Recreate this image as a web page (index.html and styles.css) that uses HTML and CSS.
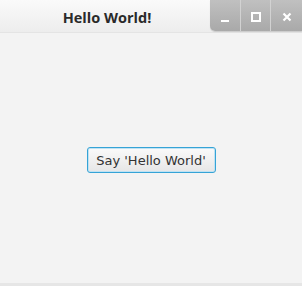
FILE: index.html
```html
<!DOCTYPE html>
<html lang="en">
<head>
    <meta charset="UTF-8">
    <title>Hello World!</title>
    <link rel="stylesheet" href="styles.css">
</head>
<body>
    <div class="window">
        <div class="titlebar">
            <div class="title">Hello World!</div>
            <div class="controls">
                <div class="ctl"><span class="min"></span></div>
                <div class="ctl"><span class="max"></span></div>
                <div class="ctl">
                    <svg width="10" height="10" viewBox="0 0 10 10"><path d="M1.5 1.5 L8.5 8.5 M8.5 1.5 L1.5 8.5" stroke="#fff" stroke-width="2.2"/></svg>
                </div>
            </div>
        </div>
        <div class="content">
            <button class="btn">Say 'Hello World'</button>
        </div>
    </div>
</body>
</html>
```

FILE: styles.css
```css
html, body {
    margin: 0;
    padding: 0;
}

body {
    width: 302px;
    height: 286px;
    overflow: hidden;
    background-color: #f3f3f3;
}

.window {
    display: flex;
    flex-direction: column;
    height: 286px;
    border-bottom: 3px solid #e6e6e6;
    box-sizing: border-box;
}

.titlebar {
    display: flex;
    height: 33px;
    background: linear-gradient(#fafafa, #ededed);
    border-bottom: 1px solid #e4e4e4;
    box-sizing: border-box;
}

.title {
    flex: 1;
    text-align: center;
    font-family: "Open Sans", sans-serif;
    font-weight: bold;
    font-size: 14.5px;
    line-height: 36px;
    color: #2a2a2a;
    padding-left: 4px;
}

.controls {
    display: flex;
    width: 92px;
    height: 31px;
    background: linear-gradient(#c0c0c0, #a9a9a9);
    border-bottom-left-radius: 5px;
    box-shadow: 0 1px 1px rgba(0, 0, 0, 0.15);
}

.ctl {
    display: flex;
    align-items: center;
    justify-content: center;
    width: 30px;
    border-left: 1px solid #d2d2d2;
    padding-top: 2px;
    box-sizing: border-box;
}

.ctl:first-child {
    border-left: none;
    width: 30px;
}

.ctl:last-child {
    width: 32px;
}

.min {
    width: 8px;
    height: 2px;
    background: #fff;
    margin-top: 8px;
}

.max {
    width: 6px;
    height: 6px;
    border: 2px solid #fff;
}

.content {
    flex: 1;
    display: flex;
    align-items: center;
    justify-content: center;
    padding-top: 4px;
}

.btn {
    width: 129px;
    height: 26px;
    padding: 0;
    font-family: "DejaVu Sans", sans-serif;
    font-size: 13px;
    color: #333;
    background: linear-gradient(#fafafa, #e6e6e6);
    border: 1px solid #35a3d6;
    border-radius: 3px;
    box-shadow: inset 0 0 0 1px #bfe2f3;
}
```
